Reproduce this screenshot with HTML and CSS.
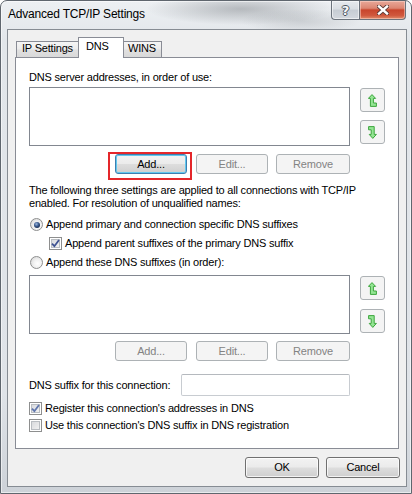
FILE: index.html
```html
<!DOCTYPE html>
<html>
<head>
<meta charset="utf-8">
<link rel="stylesheet" href="styles.css">
</head>
<body>
<div class="window">
  <div class="titlebar">
    <div class="title">Advanced TCP/IP Settings</div>
    <div class="caption-btns">
      <div class="cap-btn help">?</div>
      <div class="cap-btn close">
        <svg width="12" height="10" viewBox="0 0 12 10">
          <path d="M2 1.5 L10 8.5 M10 1.5 L2 8.5" stroke="#5a3a36" stroke-width="4.2" stroke-linecap="square"/>
          <path d="M2 1.5 L10 8.5 M10 1.5 L2 8.5" stroke="#ffffff" stroke-width="2.4" stroke-linecap="square"/>
        </svg>
      </div>
    </div>
  </div>
  <div class="client">
    <div class="tabstrip">
      <div class="tab tab-ip">IP Settings</div>
      <div class="tab tab-dns selected">DNS</div>
      <div class="tab tab-wins">WINS</div>
    </div>
    <div class="panel">
      <div class="text">DNS server addresses, in order of use:</div>
      <div class="list-row">
        <div class="listbox"></div>
        <div class="arrows">
          <div class="arrow-btn">
            <svg width="9" height="13" viewBox="0 0 9 13"><path d="M4 0.6 L7.6 4.4 H5.4 V9 H8.4 V12.4 H2.4 V4.4 H0.4 Z" fill="#93e593" stroke="#3da63d" stroke-width="1"/></svg>
          </div>
          <div class="arrow-btn">
            <svg width="9" height="13" viewBox="0 0 9 13"><path d="M0.6 0.6 H6.2 V8.4 H8.4 L4.8 12.4 L1.2 8.4 H3.2 V3.8 H0.6 Z" fill="#93e593" stroke="#3da63d" stroke-width="1"/></svg>
          </div>
        </div>
      </div>
      <div class="btn-row">
        <button class="btn default">Add...<span class="highlight"></span></button>
        <button class="btn disabled">Edit...</button>
        <button class="btn disabled remove">Remove</button>
      </div>
      <p class="para">The following three settings are applied to all connections with TCP/IP<br>enabled. For resolution of unqualified names:</p>
      <div class="opt opt-first">
        <span class="radio checked"></span>
        <span class="opt-label">Append primary and connection specific DNS suffixes</span>
      </div>
      <div class="opt opt-indent">
        <span class="check"><svg width="9" height="9" viewBox="0 0 9 9"><path d="M1 4.6 L3.4 7.2 L8 1" fill="none" stroke="#3f5392" stroke-width="1.8"/></svg></span>
        <span class="opt-label">Append parent suffixes of the primary DNS suffix</span>
      </div>
      <div class="opt">
        <span class="radio"></span>
        <span class="opt-label">Append these DNS suffixes (in order):</span>
      </div>
      <div class="list-row list-row-2">
        <div class="listbox"></div>
        <div class="arrows arrows-2">
          <div class="arrow-btn">
            <svg width="9" height="13" viewBox="0 0 9 13"><path d="M4 0.6 L7.6 4.4 H5.4 V9 H8.4 V12.4 H2.4 V4.4 H0.4 Z" fill="#93e593" stroke="#3da63d" stroke-width="1"/></svg>
          </div>
          <div class="arrow-btn">
            <svg width="9" height="13" viewBox="0 0 9 13"><path d="M0.6 0.6 H6.2 V8.4 H8.4 L4.8 12.4 L1.2 8.4 H3.2 V3.8 H0.6 Z" fill="#93e593" stroke="#3da63d" stroke-width="1"/></svg>
          </div>
        </div>
      </div>
      <div class="btn-row btn-row-2">
        <button class="btn disabled">Add...</button>
        <button class="btn disabled">Edit...</button>
        <button class="btn disabled remove">Remove</button>
      </div>
      <div class="suffix-row">
        <span class="text">DNS suffix for this connection:</span>
        <div class="textbox"></div>
      </div>
      <div class="opt opt-reg">
        <span class="check"><svg width="9" height="9" viewBox="0 0 9 9"><path d="M1 4.6 L3.4 7.2 L8 1" fill="none" stroke="#6076ad" stroke-width="1.8"/></svg></span>
        <span class="opt-label">Register this connection's addresses in DNS</span>
      </div>
      <div class="opt opt-use">
        <span class="check"></span>
        <span class="opt-label">Use this connection's DNS suffix in DNS registration</span>
      </div>
    </div>
    <div class="dialog-btns">
      <button class="btn">OK</button>
      <button class="btn">Cancel</button>
    </div>
  </div>
</div>
</body>
</html>
```

FILE: styles.css
```css
* { box-sizing: border-box; }
html, body { margin: 0; padding: 0; }
body {
  width: 412px;
  height: 494px;
  overflow: hidden;
  background: #ffffff;
  font-family: "Liberation Sans", Arial, sans-serif;
  font-size: 11px;
  letter-spacing: -0.19px;
  line-height: 13px;
  color: #000;
}

.window {
  width: 412px;
  height: 494px;
  border: 1px solid #5f666e;
  border-radius: 7px 7px 0 0;
  background:
    radial-gradient(ellipse 95px 16px at 240px 8px, rgba(95,100,106,0.38), rgba(95,100,106,0) 100%),
    radial-gradient(ellipse 60px 12px at 300px 20px, rgba(120,125,130,0.25), rgba(120,125,130,0) 100%),
    linear-gradient(#edf0f3, #e2e6ea 8%, #dfe3e8 80%, #cdd2d8);
  box-shadow: inset 0 0 0 1px rgba(255,255,255,0.55);
  display: flex;
  flex-direction: column;
  overflow: hidden;
}

.titlebar {
  height: 28px;
  display: flex;
  justify-content: space-between;
  align-items: flex-start;
  flex: none;
}
.title {
  font-size: 12px;
  letter-spacing: -0.2px;
  line-height: 15px;
  padding: 6px 0 0 7px;
  color: #000;
}
.caption-btns {
  display: flex;
  margin-right: 5px;
}
.cap-btn {
  height: 19px;
  border: 1px solid #6b737c;
  border-top: none;
  display: flex;
  align-items: center;
  justify-content: center;
}
.cap-btn.help {
  width: 28px;
  border-right: none;
  border-radius: 0 0 0 4px;
  background: linear-gradient(#e6e9ed, #d9dee3 45%, #c6ccd3 50%, #d3d8de);
  box-shadow: inset 0 0 0 1px rgba(255,255,255,0.55);
  font-family: "DejaVu Sans", sans-serif;
  font-weight: bold;
  font-size: 13px;
  line-height: 13px;
  color: #f6f7f8;
  text-shadow: 1px 0 0 #4b5460, -1px 0 0 #4b5460, 0 1px 0 #4b5460, 0 -1px 0 #4b5460;
  letter-spacing: 0;
}
.cap-btn.close {
  width: 47px;
  border-radius: 0 0 4px 0;
  background: linear-gradient(#e8a899, #dc8672 40%, #c8452c 50%, #d0583d 80%, #e08d6c);
  box-shadow: inset 0 0 0 1px rgba(255,220,210,0.5);
}

.client {
  flex: none;
  margin: 0 4px 0 6px;
  height: 458px;
  border: 1px solid #868c93;
  background: #f0f0f0;
  padding: 7px 7px 0 7px;
  display: flex;
  flex-direction: column;
}

.tabstrip {
  height: 20px;
  display: flex;
  align-items: flex-end;
  padding-left: 1px;
  position: relative;
  z-index: 2;
  flex: none;
}
.tab {
  height: 16px;
  border: 1px solid #898c95;
  border-bottom: none;
  background: linear-gradient(#f5f5f5, #ececec 45%, #e0e0e0 55%, #d9d9d9);
  line-height: 13px;
  white-space: nowrap;
  position: relative;
}
.tab-ip { width: 63px; padding-left: 5px; }
.tab-dns { width: 46px; margin-left: -1px; padding-left: 7px; }
.tab-wins { width: 39px; margin-left: -1px; padding-left: 4px; }
.tab.selected {
  height: 21px;
  margin-bottom: -1px;
  background: #ffffff;
  padding-top: 2px;
  z-index: 3;
}

.panel {
  flex: none;
  height: 392px;
  border: 1px solid #898c95;
  background: #ffffff;
  padding: 13px 12px 0 13px;
  display: flex;
  flex-direction: column;
  position: relative;
  z-index: 1;
}

.text { line-height: 13px; white-space: nowrap; }

.list-row {
  display: flex;
  margin-top: 3px;
}
.list-row-2 { margin-top: 6px; }
.listbox {
  width: 321px;
  height: 59px;
  border: 1px solid #828790;
  background: #fff;
}
.arrows {
  margin-left: 10px;
  padding-top: 1px;
  display: flex;
  flex-direction: column;
  gap: 8px;
}
.arrows-2 { gap: 9px; }
.arrow-btn {
  width: 25px;
  height: 24px;
  border: 1px solid #adb2b5;
  border-radius: 3px;
  background: #f4f4f4;
  display: flex;
  align-items: center;
  justify-content: center;
}

.btn-row {
  width: 321px;
  margin-top: 8px;
  display: flex;
  justify-content: flex-end;
  gap: 9px;
}
.btn-row .btn:last-child { margin-left: -1px; }
.btn-row-2 { margin-top: 7px; }

.btn {
  font-family: inherit;
  font-size: 11px;
  letter-spacing: -0.19px;
  line-height: 13px;
  width: 72px;
  height: 20px;
  padding: 0;
  margin: 0;
  border: 1px solid #707070;
  border-radius: 3px;
  background: linear-gradient(#f2f2f2, #ebebeb 48%, #dddddd 52%, #cfcfcf);
  box-shadow: inset 0 0 0 1px rgba(255,255,255,0.75);
  color: #000;
  display: flex;
  align-items: center;
  justify-content: center;
  position: relative;
}
.btn.remove { width: 74px; }
.btn.disabled {
  border-color: #adb2b5;
  background: #f4f4f4;
  box-shadow: none;
  color: #838383;
}
.btn.default {
  border-color: #3c7fb1;
  box-shadow: inset 0 0 0 1px #62c8ee;
  background: linear-gradient(#f2f2f2, #ebebeb 48%, #dddddd 52%, #cfcfcf);
}
.highlight {
  position: absolute;
  left: -8px;
  top: -3px;
  width: 84px;
  height: 28px;
  border: 2px solid #e4262a;
}

.para {
  margin: 10px 0 0 0;
  line-height: 13px;
  white-space: nowrap;
}

.opt {
  display: flex;
  align-items: center;
  height: 13px;
  margin-top: 6px;
  white-space: nowrap;
}
.opt-first { margin-top: 8px; }
.opt-indent { padding-left: 20px; }
.opt-reg { margin-top: 6px; }
.opt-use { margin-top: 4px; }
.opt-label { margin-left: 3px; }

.radio {
  flex: none;
  width: 13px;
  height: 13px;
  margin-left: 1px;
  border-radius: 50%;
  border: 1px solid #8e8f8f;
  background: radial-gradient(circle at 60% 60%, #ffffff 0, #f2f2f2 40%, #d6d6d6 90%);
  display: flex;
  align-items: center;
  justify-content: center;
}
.radio.checked::after {
  content: "";
  width: 6px;
  height: 6px;
  border-radius: 50%;
  background: radial-gradient(circle at 40% 35%, #9fb9dd 0, #3d5d91 40%, #0f1f3f 85%);
}

.check {
  flex: none;
  width: 13px;
  height: 13px;
  border: 1px solid #8e8f8f;
  background: linear-gradient(135deg, #d2d4d8, #f7f7f7);
  box-shadow: inset 0 0 0 1px #ffffff, inset 0 0 0 2px #b9bdc2;
  display: flex;
  align-items: center;
  justify-content: center;
}

.suffix-row {
  width: 321px;
  margin-top: 13px;
  display: flex;
  align-items: center;
  justify-content: space-between;
}
.textbox {
  width: 169px;
  height: 22px;
  border: 1px solid #c8ccd1;
  border-top-color: #b5b9be;
  border-radius: 2px;
  background: #fff;
}

.dialog-btns {
  margin-top: 8px;
  margin-right: -1px;
  display: flex;
  justify-content: flex-end;
  gap: 7px;
}
.dialog-btns .btn {
  width: 74px;
  height: 21px;
}
```
